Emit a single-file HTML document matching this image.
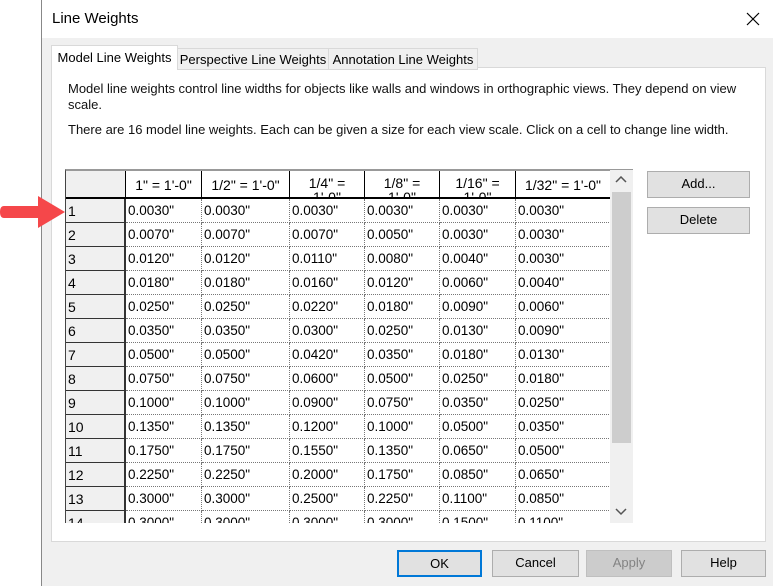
<!DOCTYPE html><html><head><style>
body{margin:0;width:773px;height:586px;position:relative;background:#fff;font-family:"Liberation Sans",sans-serif;overflow:hidden}
.a{position:absolute}
.dlg{left:41px;top:0;width:732px;height:586px;background:#f0f0f0;border-left:1px solid #888}
.tb{left:0;top:0;width:732px;height:38px;background:#fff}
.btn{position:absolute;background:#e1e1e1;border:1px solid #adadad;font-size:13px;text-align:center;box-sizing:border-box;line-height:24px;color:#000}
.c{position:absolute;font-size:13.5px;line-height:24px;padding-left:2px;box-sizing:border-box;border-right:1px dotted #777;border-bottom:1px dotted #777;height:24px;background:#fff}
.h{position:absolute;font-size:14px;text-align:center;border-right:1px solid #000;background:#fff;height:27px;box-sizing:border-box;overflow:hidden;line-height:14px}
</style></head><body>
<div class="a dlg">
<div class="a tb"><div class="a" style="left:10px;top:10px;font-size:15px">Line Weights</div>
<svg class="a" style="left:704px;top:12px" width="14" height="14"><path d="M1 1L13 13M13 1L1 13" stroke="#000" stroke-width="1.2"/></svg></div>
<div class="a" style="left:9px;top:67px;width:713px;height:473px;background:#fff;border:1px solid #d9d9d9"></div>
<div class="a" style="left:9px;top:45px;width:125px;height:24px;background:#fff;border:1px solid #d9d9d9;border-bottom:none;font-size:13px;line-height:24px;text-align:center">Model Line Weights</div>
<div class="a" style="left:135px;top:48px;width:150px;height:20px;background:#f0f0f0;border:1px solid #d9d9d9;font-size:13px;line-height:21px;text-align:center">Perspective Line Weights</div>
<div class="a" style="left:286px;top:48px;width:148px;height:20px;background:#f0f0f0;border:1px solid #d9d9d9;font-size:13px;line-height:21px;text-align:center">Annotation Line Weights</div>
<div class="a" style="left:26px;top:81px;width:690px;font-size:13px;line-height:16px;color:#111">Model line weights control line widths for objects like walls and windows in orthographic views. They depend on view scale.</div>
<div class="a" style="left:26px;top:122px;font-size:13px;color:#111">There are 16 model line weights. Each can be given a size for each view scale. Click on a cell to change line width.</div>
<div class="btn" style="left:605px;top:171px;width:103px;height:27px">Add...</div>
<div class="btn" style="left:605px;top:207px;width:103px;height:27px">Delete</div>
<div class="btn" style="left:355px;top:550px;width:85px;height:27px;border:2px solid #0078d7;line-height:23px">OK</div>
<div class="btn" style="left:450px;top:550px;width:87px;height:27px">Cancel</div>
<div class="btn" style="left:544px;top:550px;width:86px;height:27px;background:#ccc;border-color:#bfbfbf;color:#838383">Apply</div>
<div class="btn" style="left:639px;top:550px;width:85px;height:27px">Help</div>
</div>
<div id="t" class="a" style="left:65px;top:169px;width:568px;height:354px;overflow:hidden;border-top:2px solid #999;border-left:1px solid #444;box-sizing:border-box;background:#fff"></div>
<div class="a" style="left:610px;top:170px;width:23px;height:353px;background:#f0f0f0"></div>
<div class="a" style="left:612px;top:192px;width:19px;height:251px;background:#cdcdcd"></div>
<svg class="a" style="left:615px;top:176px" width="12" height="8"><path d="M1 6L6 1L11 6" fill="none" stroke="#555" stroke-width="1.5"/></svg>
<svg class="a" style="left:615px;top:508px" width="12" height="8"><path d="M1 1L6 6L11 1" fill="none" stroke="#555" stroke-width="1.5"/></svg>
<svg class="a" style="left:0;top:196px" width="66" height="34"><path d="M4 10H38V0L65 16L38 32V22H4Q0 22 0 16Q0 10 4 10Z" fill="#f5474a"/></svg>
<script>
var cols=[0,60,136,224,299,374,450,545];
var hd=['','1" = 1\'-0"','1/2" = 1\'-0"','1/4" =<br>1\'-0"','1/8" =<br>1\'-0"','1/16" =<br>1\'-0"','1/32" = 1\'-0"'];
var d=[["0.0030","0.0030","0.0030","0.0030","0.0030","0.0030"],["0.0070","0.0070","0.0070","0.0050","0.0030","0.0030"],["0.0120","0.0120","0.0110","0.0080","0.0040","0.0030"],["0.0180","0.0180","0.0160","0.0120","0.0060","0.0040"],["0.0250","0.0250","0.0220","0.0180","0.0090","0.0060"],["0.0350","0.0350","0.0300","0.0250","0.0130","0.0090"],["0.0500","0.0500","0.0420","0.0350","0.0180","0.0130"],["0.0750","0.0750","0.0600","0.0500","0.0250","0.0180"],["0.1000","0.1000","0.0900","0.0750","0.0350","0.0250"],["0.1350","0.1350","0.1200","0.1000","0.0500","0.0350"],["0.1750","0.1750","0.1550","0.1350","0.0650","0.0500"],["0.2250","0.2250","0.2000","0.1750","0.0850","0.0650"],["0.3000","0.3000","0.2500","0.2250","0.1100","0.0850"],["0.3000","0.3000","0.3000","0.3000","0.1500","0.1100"]];
var h='';
for(var i=0;i<7;i++){var w=cols[i+1]-cols[i];var two=hd[i].indexOf('<br>')>0;
h+='<div class="h" style="left:'+cols[i]+'px;top:0;width:'+w+'px;'+(i==0?'background:#f0f0f0;':'')+'padding-top:'+(two?'5px':'7px')+'">'+hd[i]+'</div>';}
h+='<div class="a" style="left:0;top:26px;width:545px;height:2px;background:#000"></div>';
for(var r=0;r<14;r++){var y=28+r*24;
h+='<div class="c" style="left:0;top:'+y+'px;width:60px;background:#f0f0f0;border-right:2px solid #333;border-bottom:1px solid #333;font-size:14px">'+(r+1)+'</div>';
for(var j=0;j<6;j++){h+='<div class="c" style="left:'+cols[j+1]+'px;top:'+y+'px;width:'+(cols[j+2]-cols[j+1])+'px">'+d[r][j]+'"</div>';}}
document.getElementById('t').innerHTML=h;
</script>
</body></html>
